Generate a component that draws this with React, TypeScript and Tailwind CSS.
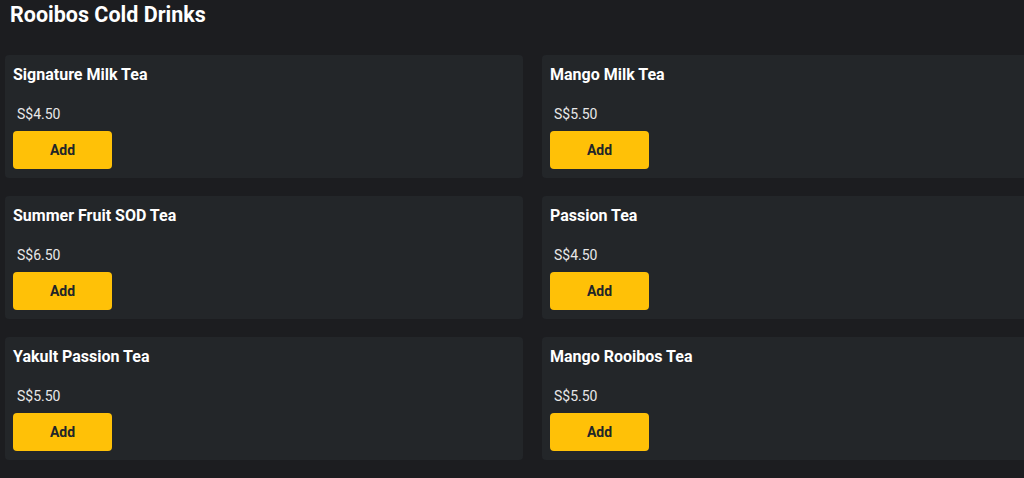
import React from "react";

const drinks = [
  { name: "Signature Milk Tea", price: "S$4.50" },
  { name: "Mango Milk Tea", price: "S$5.50" },
  { name: "Summer Fruit SOD Tea", price: "S$6.50" },
  { name: "Passion Tea", price: "S$4.50" },
  { name: "Yakult Passion Tea", price: "S$5.50" },
  { name: "Mango Rooibos Tea", price: "S$5.50" },
];

export default function App() {
  return (
    <main
      className="w-[1024px] h-[478px] overflow-hidden bg-[#1c1d20] text-white"
      style={{ fontFamily: "Roboto, 'Liberation Sans', sans-serif" }}
    >
      <h1 className="pl-[10px] pt-[1px] text-[21.5px] leading-[28px] font-bold">Rooibos Cold Drinks</h1>
      <div className="mt-[26px] pl-[5px] grid grid-cols-[518px_518px] gap-x-[19px] gap-y-[18px]">
        {drinks.map((d) => (
          <div key={d.name} className="h-[123px] rounded-[4px] bg-[#232629] pl-[8px] pt-[9px]">
            <h2 className="text-[16px] leading-[22px] font-bold">{d.name}</h2>
            <p className="mt-[19px] pl-[4px] text-[14px] leading-[18px] text-[#e8e8e8]">{d.price}</p>
            <button className="mt-[8px] w-[99px] h-[38px] rounded-[4px] bg-[#ffc107] text-[14px] font-bold text-[#212529]">
              Add
            </button>
          </div>
        ))}
      </div>
    </main>
  );
}
